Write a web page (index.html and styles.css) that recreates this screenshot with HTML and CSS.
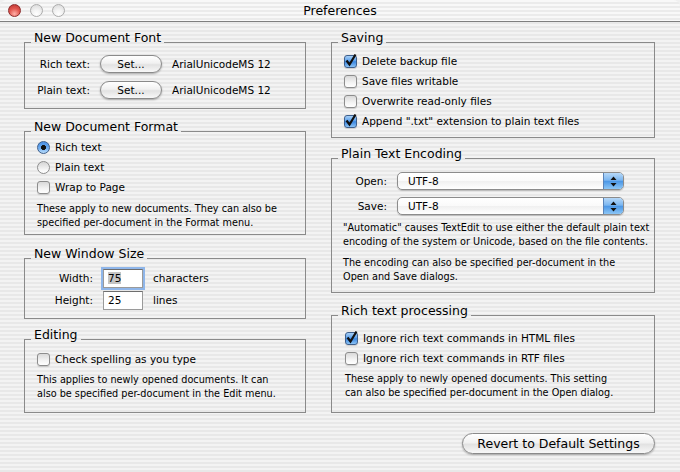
FILE: index.html
```html
<!DOCTYPE html>
<html lang="en">
<head>
  <meta charset="UTF-8" />
  <title>Preferences</title>
  <link rel="stylesheet" href="styles.css">
</head>
<body>
  <div class="window">
    <div class="titlebar">
      <div class="lights">
        <span class="light light-close"></span>
        <span class="light"></span>
        <span class="light"></span>
      </div>
      <div class="title">Preferences</div>
      <div></div>
    </div>

    <div class="content">
      <div class="columns">
        <!-- Left column -->
        <div class="column column-left">
          <fieldset class="group group-font">
            <legend>New Document Font</legend>
            <div class="font-rows">
              <span class="label">Rich text:</span>
              <button class="btn btn-small">Set...</button>
              <span class="text">ArialUnicodeMS 12</span>
              <span class="label">Plain text:</span>
              <button class="btn btn-small">Set...</button>
              <span class="text">ArialUnicodeMS 12</span>
            </div>
          </fieldset>

          <fieldset class="group group-format">
            <legend>New Document Format</legend>
            <div class="body">
              <div class="option"><span class="radio radio-on"></span>Rich text</div>
              <div class="option"><span class="radio"></span>Plain text</div>
              <div class="option"><span class="check"></span>Wrap to Page</div>
              <p class="note">These apply to new documents. They can also be<br>specified per-document in the Format menu.</p>
            </div>
          </fieldset>

          <fieldset class="group group-size">
            <legend>New Window Size</legend>
            <div class="size-rows">
              <span class="label">Width:</span>
              <span class="field field-focus"><span class="selected">75</span></span>
              <span class="text">characters</span>
              <span class="label">Height:</span>
              <span class="field">25</span>
              <span class="text">lines</span>
            </div>
          </fieldset>

          <fieldset class="group group-editing">
            <legend>Editing</legend>
            <div class="body">
              <div class="option"><span class="check"></span>Check spelling as you type</div>
              <p class="note">This applies to newly opened documents. It can<br>also be specified per-document in the Edit menu.</p>
            </div>
          </fieldset>
        </div>

        <!-- Right column -->
        <div class="column column-right">
          <fieldset class="group group-saving">
            <legend>Saving</legend>
            <div class="body">
              <div class="option"><span class="check check-on"><svg viewBox="0 0 13 13"><path d="M2.5 6.5 L5.5 10.5 L11.5 0.5"/></svg></span>Delete backup file</div>
              <div class="option"><span class="check"></span>Save files writable</div>
              <div class="option"><span class="check"></span>Overwrite read-only files</div>
              <div class="option"><span class="check check-on"><svg viewBox="0 0 13 13"><path d="M2.5 6.5 L5.5 10.5 L11.5 0.5"/></svg></span>Append ".txt" extension to plain text files</div>
            </div>
          </fieldset>

          <fieldset class="group group-encoding">
            <legend>Plain Text Encoding</legend>
            <div class="body">
              <div class="popup-rows">
                <span class="label">Open:</span>
                <div class="popup">
                  <span class="popup-value">UTF-8</span>
                  <span class="popup-arrows"><svg viewBox="0 0 7 11"><path d="M3.5 0.5 L6.5 4 L0.5 4 Z M3.5 10.5 L6.5 7 L0.5 7 Z"/></svg></span>
                </div>
                <span class="label">Save:</span>
                <div class="popup">
                  <span class="popup-value">UTF-8</span>
                  <span class="popup-arrows"><svg viewBox="0 0 7 11"><path d="M3.5 0.5 L6.5 4 L0.5 4 Z M3.5 10.5 L6.5 7 L0.5 7 Z"/></svg></span>
                </div>
              </div>
              <p class="note">"Automatic" causes TextEdit to use either the default plain text<br>encoding of the system or Unicode, based on the file contents.</p>
              <p class="note note-gap">The encoding can also be specified per-document in the<br>Open and Save dialogs.</p>
            </div>
          </fieldset>

          <fieldset class="group group-rich">
            <legend>Rich text processing</legend>
            <div class="body">
              <div class="option"><span class="check check-on"><svg viewBox="0 0 13 13"><path d="M2.5 6.5 L5.5 10.5 L11.5 0.5"/></svg></span>Ignore rich text commands in HTML files</div>
              <div class="option"><span class="check"></span>Ignore rich text commands in RTF files</div>
              <p class="note">These apply to newly opened documents. This setting<br>can also be specified per-document in the Open dialog.</p>
            </div>
          </fieldset>
        </div>
      </div>

      <div class="footer">
        <button class="btn btn-large">Revert to Default Settings</button>
      </div>
    </div>
  </div>
</body>
</html>
```

FILE: styles.css
```css
/* Aqua-style preferences window */
* {
  margin: 0;
  padding: 0;
  box-sizing: border-box;
}

body {
  background: #f0f0f0;
  font-family: "DejaVu Sans", sans-serif;
  color: #000;
}

.window {
  width: 680px;
  height: 472px;
  overflow: hidden;
  border-radius: 7px 7px 0 0;
  background: repeating-linear-gradient(to bottom, #f3f3f3 0, #f3f3f3 2px, #e8e8e8 2px, #e8e8e8 4px);
}

/* Title bar */
.titlebar {
  height: 22px;
  border-bottom: 1px solid #7e7e7e;
  display: grid;
  grid-template-columns: 1fr auto 1fr;
  align-items: center;
  padding: 0 8px;
  background: repeating-linear-gradient(to bottom, #f8f8f8 0, #f8f8f8 2px, #ebebeb 2px, #ebebeb 4px);
}

.lights {
  display: flex;
  gap: 9px;
}

.light {
  width: 13px;
  height: 13px;
  border-radius: 50%;
  border: 1px solid #ababab;
  background: radial-gradient(circle at 50% 80%, #ffffff 0, #f2f2f2 40%, #d6d6d6 100%);
}

.light-close {
  border-color: #8d2b2b;
  background: radial-gradient(circle at 50% 80%, #ffb0a8 0, #e2574f 50%, #b8302c 100%);
}

.title {
  font-size: 12.5px;
}

/* Content */
.content {
  padding: 9px 25px 0 24px;
}

.columns {
  display: flex;
  gap: 25px;
  align-items: flex-start;
}

.column {
  display: flex;
  flex-direction: column;
}

.column-left {
  width: 282px;
}

.column-right {
  flex: 1;
}

/* Group boxes */
.group {
  border: 1px solid #8a8a8a;
  min-width: 0;
}

.group legend {
  margin-left: 6px;
  padding: 0 3px 8px;
  font-size: 12.5px;
  line-height: 14px;
}

.body {
  padding: 0 12px;
}

.label {
  font-size: 10.5px;
  text-align: right;
}

.text {
  font-size: 10.5px;
}

.option {
  height: 20px;
  display: flex;
  align-items: center;
  gap: 5px;
  font-size: 10.5px;
}

.note {
  font-size: 9.7px;
  line-height: 13.5px;
  margin-top: 4px;
  white-space: nowrap;
}

.note-gap {
  margin-top: 7px;
}

/* New Document Font */
.font-rows {
  display: grid;
  grid-template-columns: 65px 62px auto;
  grid-auto-rows: 18px;
  column-gap: 10px;
  row-gap: 8px;
  align-items: center;
  padding: 2px 0 9px;
}

/* New Document Format */
.group-format {
  margin-top: 11px;
}

.group-format .body {
  margin-top: -5px;
  padding-bottom: 5px;
}

.group-format .note {
  margin-top: 5px;
}

/* New Window Size */
.group-size {
  margin-top: 12px;
}

.size-rows {
  display: grid;
  grid-template-columns: 68px 40px auto;
  grid-auto-rows: 22px;
  column-gap: 10px;
  align-items: center;
  margin-top: -2px;
  padding-bottom: 7px;
}

.field {
  height: 19px;
  display: flex;
  align-items: center;
  padding-left: 4px;
  background: #fff;
  border: 1px solid #9a9a9a;
  border-top-color: #6e6e6e;
  font-size: 10.5px;
}

.field-focus {
  box-shadow: 0 0 0 2px #8fb6ea;
}

.selected {
  background: #c4c4c4;
}

/* Editing */
.group-editing {
  margin-top: 9px;
}

.group-editing .body {
  margin-top: -1px;
  padding-bottom: 12px;
}

/* Saving */
.group-saving .body {
  margin-top: -2px;
  padding-bottom: 6px;
}

/* Plain Text Encoding */
.group-encoding {
  margin-top: 9px;
}

.group-encoding .body {
  padding: 3px 0 9px 11px;
}

.group-encoding .note:first-of-type {
  margin-top: 6px;
}

.group-encoding .note-gap {
  margin-top: 8px;
}

.popup-rows {
  display: grid;
  grid-template-columns: 44px 227px;
  grid-auto-rows: 18px;
  column-gap: 10px;
  row-gap: 7px;
  align-items: center;
}

.popup {
  height: 18px;
  display: flex;
  border: 1px solid #8c8c8c;
  border-radius: 5px;
  overflow: hidden;
  background: linear-gradient(#ffffff, #fafafa 50%, #f0f0f0 51%, #ffffff);
  box-shadow: 0 1px 1px rgba(0, 0, 0, 0.2);
}

.popup-value {
  flex: 1;
  padding-left: 10px;
  font-size: 10.5px;
  line-height: 16px;
}

.popup-arrows {
  width: 20px;
  display: flex;
  align-items: center;
  justify-content: center;
  border-left: 1px solid #5a83b8;
  background: linear-gradient(#b6d8f8 0%, #7bb6f0 45%, #4c97e6 52%, #8cc6f6 100%);
}

.popup-arrows svg {
  width: 7px;
  height: 11px;
  fill: #111;
}

/* Rich text processing */
.group-rich {
  margin-top: 11px;
}

.group-rich .body {
  margin-top: 2px;
  padding: 0 12px 13px 13px;
}

/* Checkboxes and radios */
.check {
  width: 13px;
  height: 13px;
  flex: none;
  border: 1px solid #8d8d8d;
  border-radius: 3px;
  background: linear-gradient(#d9d9d9, #f4f4f4 60%, #ffffff);
  box-shadow: 0 1px 1px rgba(0, 0, 0, 0.15);
}

.check-on {
  border-color: #3e5f8c;
  background: linear-gradient(#a7cff6 0%, #5ca1ec 45%, #3a86e0 52%, #8dc4f6 100%);
}

.check svg {
  display: block;
  width: 13px;
  height: 13px;
  margin: -2px 0 0 -1px;
  overflow: visible;
  fill: none;
  stroke: #111;
  stroke-width: 2.2;
}

.radio {
  width: 13px;
  height: 13px;
  flex: none;
  border: 1px solid #8d8d8d;
  border-radius: 50%;
  background: linear-gradient(#d4d4d4, #f6f6f6 70%, #ffffff);
}

.radio-on {
  border-color: #3e5f8c;
  background: radial-gradient(circle, #111 0, #111 2.2px, transparent 2.8px),
    linear-gradient(#4a8fe2 0%, #6aaaf0 50%, #b7dbfa 100%);
}

/* Aqua push buttons */
.btn {
  font-family: "DejaVu Sans", sans-serif;
  color: #000;
  border: 1px solid #8a8a8a;
  background: linear-gradient(#ffffff 0%, #f1f1f1 45%, #e2e2e2 55%, #f8f8f8 100%);
  box-shadow: 0 1px 2px rgba(0, 0, 0, 0.3);
  cursor: pointer;
}

.btn-small {
  height: 18px;
  border-radius: 9px;
  font-size: 10.5px;
}

.footer {
  display: flex;
  justify-content: flex-end;
  margin-top: 20px;
}

.btn-large {
  width: 193px;
  height: 21px;
  border-radius: 11px;
  font-size: 12.5px;
}
```
